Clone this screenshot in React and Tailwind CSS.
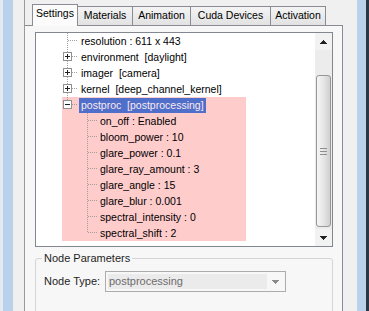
import React from "react";

const LINE = "#a0a0a0";

function Box({ x, y, plus }) {
  return (
    <>
      <rect x={x + 0.5} y={y + 0.5} width="8" height="8" fill="#ffffff" stroke="#919191" />
      <line x1={x + 2} y1={y + 4.5} x2={x + 7} y2={y + 4.5} stroke="#1f1f1f" />
      {plus && <line x1={x + 4.5} y1={y + 2} x2={x + 4.5} y2={y + 7} stroke="#1f1f1f" />}
    </>
  );
}

function RootGutter({ leaf }) {
  return (
    <svg width="43" height="16" className="block shrink-0" shapeRendering="crispEdges">
      <line x1="31.5" y1="0" x2="31.5" y2="16" stroke={LINE} strokeDasharray="1 1" />
      {leaf ? (
        <line x1="32" y1="7.5" x2="42" y2="7.5" stroke={LINE} strokeDasharray="1 1" />
      ) : (
        <>
          <line x1="36" y1="7.5" x2="42" y2="7.5" stroke={LINE} strokeDasharray="1 1" />
          <Box x={27} y={3} plus />
        </>
      )}
    </svg>
  );
}

function ParentGutter() {
  return (
    <svg width="17" height="16" className="block shrink-0" shapeRendering="crispEdges">
      <line x1="5.5" y1="0" x2="5.5" y2="3" stroke={LINE} strokeDasharray="1 1" />
      <line x1="10" y1="7.5" x2="16" y2="7.5" stroke={LINE} strokeDasharray="1 1" />
      <Box x={1} y={3} />
    </svg>
  );
}

function ChildGutter({ last }) {
  return (
    <svg width="36" height="16" className="block shrink-0" shapeRendering="crispEdges">
      <line x1="25.5" y1="0" x2="25.5" y2={last ? 8 : 16} stroke={LINE} strokeDasharray="1 1" />
      <line x1="26" y1="7.5" x2="35" y2="7.5" stroke={LINE} strokeDasharray="1 1" />
    </svg>
  );
}

const roots = [
  { t: "resolution : 611 x 443", leaf: true },
  { t: "environment  [daylight]" },
  { t: "imager  [camera]" },
  { t: "kernel  [deep_channel_kernel]" },
];

const children = [
  "on_off : Enabled",
  "bloom_power : 10",
  "glare_power : 0.1",
  "glare_ray_amount : 3",
  "glare_angle : 15",
  "glare_blur : 0.001",
  "spectral_intensity : 0",
  "spectral_shift : 2",
];

function Tab({ children, w, selected }) {
  if (selected) {
    return (
      <div
        className={`${w} h-[22px] -mb-px relative z-10 border border-b-0 border-[#898c95] bg-[#fbfbfb] flex items-center justify-center pb-[3px] shrink-0`}
      >
        {children}
      </div>
    );
  }
  return (
    <div
      className={`${w} h-[19px] border-t border-r border-[#898c95] bg-gradient-to-b from-[#f4f4f4] to-[#e2e2e2] flex items-center justify-center shrink-0`}
    >
      {children}
    </div>
  );
}

export default function App() {
  return (
    <div className="w-[369px] h-[311px] overflow-hidden flex bg-[#f0f0f0] font-['Liberation_Sans',Arial,sans-serif] text-[10.5px] text-black">
      <div className="w-[3px] shrink-0 bg-[#e3eaf2]" />
      <div className="w-[10px] shrink-0 bg-[#b9d1ea]" />
      <div className="w-[11px] shrink-0" />

      <div className="w-[319px] shrink-0 border-l border-[#9a9a9a] flex flex-col">
        <div className="h-[25px] flex items-end pl-[7px] shrink-0">
          <Tab w="w-[46px]" selected>
            Settings
          </Tab>
          <Tab w="w-[55px]">Materials</Tab>
          <Tab w="w-[58px]">Animation</Tab>
          <Tab w="w-[80px]">Cuda Devices</Tab>
          <Tab w="w-[55px]">Activation</Tab>
        </div>

        <div className="flex-1 border-t border-r border-[#898c95] bg-[#f7f7f7] pt-[6px] pl-[10px] pr-[9px] flex flex-col">
          <div className="h-[215px] shrink-0 border border-[#828790] bg-white flex">
            <div className="flex-1 overflow-hidden flex flex-col">
              {roots.map((r) => (
                <div key={r.t} className="h-[16px] flex items-center">
                  <RootGutter leaf={r.leaf} />
                  <span className="px-[2px] whitespace-pre leading-[15px]">{r.t}</span>
                </div>
              ))}
              <div className="ml-[26px] w-[184px] bg-[#ffcccc] flex flex-col">
                <div className="h-[16px] flex items-center">
                  <ParentGutter />
                  <span className="px-[2px] h-[15px] whitespace-pre leading-[15px] bg-[#4f6fca] text-[#fbe8ee]">
                    postproc  [postprocessing]
                  </span>
                </div>
                {children.map((c, i) => (
                  <div key={c} className="h-[16px] flex items-center">
                    <ChildGutter last={i === children.length - 1} />
                    <span className="px-[2px] whitespace-pre leading-[15px]">{c}</span>
                  </div>
                ))}
              </div>
            </div>

            <div className="w-[17px] shrink-0 flex flex-col bg-[#ececec]">
              <div className="h-[17px] flex items-center justify-center bg-[#f2f2f2]">
                <svg width="7" height="4" shapeRendering="crispEdges">
                  <polygon points="3.5,0 7,4 0,4" fill="#222" />
                </svg>
              </div>
              <div className="flex-1 flex flex-col">
                <div className="mt-[25px] mx-[1px] h-[152px] rounded-[3px] border border-[#979797] bg-gradient-to-r from-[#f6f6f6] via-[#e6e6e6] to-[#cfcfcf] flex flex-col items-center justify-center gap-[2px]">
                  <div className="w-[7px] h-px bg-[#8e8e8e]" />
                  <div className="w-[7px] h-px bg-[#8e8e8e]" />
                  <div className="w-[7px] h-px bg-[#8e8e8e]" />
                </div>
              </div>
              <div className="h-[17px] flex items-center justify-center bg-[#f2f2f2]">
                <svg width="7" height="4" shapeRendering="crispEdges">
                  <polygon points="0,0 7,0 3.5,4" fill="#222" />
                </svg>
              </div>
            </div>
          </div>

          <fieldset className="mt-[5px] h-[100px] shrink-0 border border-[#d5d5d5] rounded-[3px] pl-[6px] pr-[8px]">
            <legend className="px-[2px] leading-[13px] text-[11px] text-[#1e1e1e]">Node Parameters</legend>
            <div className="mt-[6px] pl-[2px] flex items-center">
              <span className="w-[61px] shrink-0 text-[11px] text-[#1e1e1e]">Node Type:</span>
              <div className="w-[181px] h-[21px] border border-[#acacac] bg-[#f7f7f7] flex p-[2px]">
                <div className="flex-1 bg-[#ebebeb] flex items-center pl-px text-[11px] text-[#6d6d6d]">postprocessing</div>
                <div className="w-[16px] flex items-center justify-center">
                  <svg width="7" height="4" shapeRendering="crispEdges">
                    <polygon points="0,0 7,0 3.5,4" fill="#8a8a8a" />
                  </svg>
                </div>
              </div>
            </div>
          </fieldset>
        </div>
      </div>

      <div className="w-[14px] shrink-0" />
      <div className="w-[9px] shrink-0 bg-[#b9d1ea]" />
      <div className="w-[3px] shrink-0 bg-[#2a3644]" />
    </div>
  );
}
